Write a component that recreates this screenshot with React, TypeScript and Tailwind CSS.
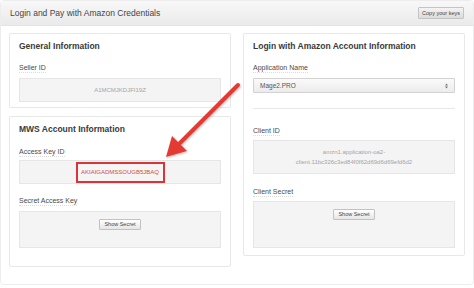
const font = "font-['Liberation_Sans',Arial,sans-serif]";

function Label({ children }: { children: React.ReactNode }) {
  return (
    <div className="h-[8px] leading-[8px]">
      <span className="inline-block border-b border-dotted border-[#dcdcdc] text-[7px] text-[#4a4a4a]">
        {children}
      </span>
    </div>
  );
}

function Title({ children }: { children: React.ReactNode }) {
  return (
    <h3 className="h-[10px] leading-[10px] text-[8.5px] font-bold text-[#3a3a3a]">
      {children}
    </h3>
  );
}

function SecretButton() {
  return (
    <button
      type="button"
      className="h-[11px] px-[4px] leading-[9px] text-[5.5px] text-[#444] border border-[#c2c2c2] rounded-[1px] bg-gradient-to-b from-white to-[#e6e6e6]"
    >
      Show Secret
    </button>
  );
}

export default function App() {
  return (
    <div className={`${font} w-[474px] h-[288px] bg-white`}>
      <div className="h-[285px] border border-[#ededed] rounded-[4px] overflow-hidden">
        {/* Header */}
        <div className="h-[25px] flex items-center justify-between pl-[9px] pr-[9px] bg-gradient-to-b from-[#f8f8f8] to-[#eaeaea] border-b border-[#e4e4e4]">
          <span className="text-[8.5px] text-[#454545]">
            Login and Pay with Amazon Credentials
          </span>
          <button
            type="button"
            className="h-[12px] w-[46px] leading-[10px] text-[5.5px] text-[#444] border border-[#c4c4c4] rounded-[1px] bg-gradient-to-b from-[#f4f4f4] to-[#dcdcdc]"
          >
            Copy your keys
          </button>
        </div>

        <div className="relative flex gap-[12px] px-[8px] pt-[7px]">
          {/* Left column */}
          <div className="w-[222px] flex flex-col gap-[8px]">
            <div className="h-[75px] border border-[#e8e8e8] rounded-[2px] px-[9px] pt-[7px]">
              <Title>General Information</Title>
              <div className="mt-[10px]">
                <Label>Seller ID</Label>
              </div>
              <div className="mt-[9px] h-[24px] flex items-center justify-center bg-[#f4f4f4] border border-[#e6e6e6] text-[6px] text-[#a4a4a4]">
                A1MCMJKDJFI19Z
              </div>
            </div>

            <div className="h-[151px] border border-[#e8e8e8] rounded-[2px] px-[9px] pt-[7px]">
              <Title>MWS Account Information</Title>
              <div className="mt-[11px]">
                <Label>Access Key ID</Label>
              </div>
              <div className="mt-[7px] h-[24px] flex items-center justify-center bg-[#f4f4f4] border border-[#e6e6e6]">
                <span className="h-[21px] w-[89px] flex items-center justify-center border-2 border-[#d8353a] text-[6px] text-[#c95050] bg-[#f7f4f4]">
                  AKIAIGADMSSOUGB5JBAQ
                </span>
              </div>
              <div className="mt-[10px]">
                <Label>Secret Access Key</Label>
              </div>
              <div className="mt-[9px] h-[37px] pt-[7px] flex justify-center items-start bg-[#f4f4f4] border border-[#e6e6e6]">
                <SecretButton />
              </div>
            </div>
          </div>

          {/* Right column */}
          <div className="w-[222px]">
            <div className="h-[223px] border border-[#e8e8e8] rounded-[2px] px-[9px] pt-[7px]">
              <Title>Login with Amazon Account Information</Title>
              <div className="mt-[10px]">
                <Label>Application Name</Label>
              </div>
              <div className="mt-[9px] h-[15px] flex items-center justify-between pl-[6px] pr-[6px] border border-[#d2d2d2] rounded-[1px] bg-gradient-to-b from-[#fafafa] to-[#ececec] text-[6.5px] text-[#555]">
                <span>Mage2.PRO</span>
                <svg width="3" height="6" viewBox="0 0 3 6" aria-hidden="true">
                  <path d="M0 2.5 L1.5 0.5 L3 2.5 Z M0 3.5 L1.5 5.5 L3 3.5 Z" fill="#777" />
                </svg>
              </div>
              <div className="mt-[15px] h-px bg-[#e8e8e8]" />
              <div className="mt-[15px]">
                <Label>Client ID</Label>
              </div>
              <div className="mt-[8px] h-[34px] flex flex-col items-center justify-center bg-[#f4f4f4] border border-[#e6e6e6] text-[6px] leading-[10px] text-[#a4a4a4]">
                <span>amzn1.application-oa2-</span>
                <span>client.11bc326c3ed84f0f62d69d6d69efd6d2</span>
              </div>
              <div className="mt-[11px]">
                <Label>Client Secret</Label>
              </div>
              <div className="mt-[8px] h-[47px] pt-[7px] flex justify-center items-start bg-[#f4f4f4] border border-[#e6e6e6]">
                <SecretButton />
              </div>
            </div>
          </div>

          {/* Annotation arrow */}
          <svg
            className="absolute pointer-events-none"
            width="474"
            height="260"
            viewBox="0 26 474 260"
            aria-hidden="true"
            style={{ left: -1, top: 0 }}
          >
            <defs>
              <filter id="sh" x="-20%" y="-20%" width="140%" height="140%">
                <feDropShadow dx="1" dy="1" stdDeviation="1" floodColor="#000" floodOpacity="0.25" />
              </filter>
            </defs>
            <g filter="url(#sh)">
              <line x1="238" y1="85" x2="180" y2="143" stroke="#e33b30" strokeWidth="4" strokeLinecap="round" />
              <polygon points="166,157 187,151 172,136" fill="#e33b30" />
            </g>
          </svg>
        </div>
      </div>
    </div>
  );
}
